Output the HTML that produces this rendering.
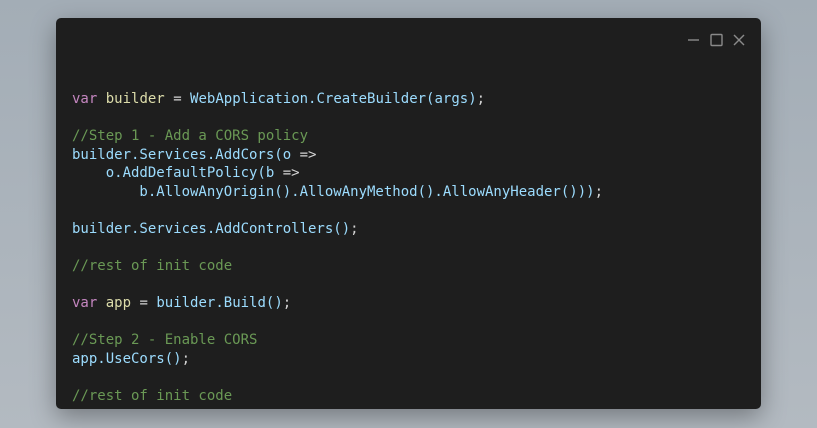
<!DOCTYPE html>
<html><head><style>
html,body{margin:0;padding:0}
body{width:817px;height:428px;background:linear-gradient(180deg,#a3adb6,#b3bac1);position:relative;overflow:hidden}
.win{position:absolute;left:56px;top:18px;width:705px;height:391px;background:#1e1e1e;border-radius:5px;box-shadow:0 8px 25px rgba(0,0,0,.35)}
pre{position:absolute;left:16px;top:72px;margin:0;font-family:"DejaVu Sans Mono","Liberation Mono",monospace;font-size:14px;line-height:18.56px;color:#9cdcfe}
.k{color:#c586c0}.v{color:#dcdcaa}.c{color:#6a9955}.p{color:#d4d4d4}
.ctl{position:absolute;top:14px;right:14px;width:60px;height:16px}
</style></head><body>
<div class="win">
<svg class="ctl" viewBox="0 0 60 16"><g stroke="#8a8a8a" stroke-width="1.4" fill="none"><line x1="1" y1="8" x2="12" y2="8"/><rect x="24" y="2.5" width="11" height="11" rx="1"/><line x1="47" y1="3" x2="57" y2="13"/><line x1="57" y1="3" x2="47" y2="13"/></g></svg>
<pre><span class="k">var</span> <span class="v">builder</span> <span class="p">=</span> WebApplication.CreateBuilder(args)<span class="p">;</span>

<span class="c">//Step 1 - Add a CORS policy</span>
builder.Services.AddCors(o <span class="p">=&gt;</span>
    o.AddDefaultPolicy(b <span class="p">=&gt;</span>
        b.AllowAnyOrigin().AllowAnyMethod().AllowAnyHeader()))<span class="p">;</span>

builder.Services.AddControllers()<span class="p">;</span>

<span class="c">//rest of init code</span>

<span class="k">var</span> <span class="v">app</span> <span class="p">=</span> builder.Build()<span class="p">;</span>

<span class="c">//Step 2 - Enable CORS</span>
app.UseCors()<span class="p">;</span>

<span class="c">//rest of init code</span></pre>
</div>
</body></html>
